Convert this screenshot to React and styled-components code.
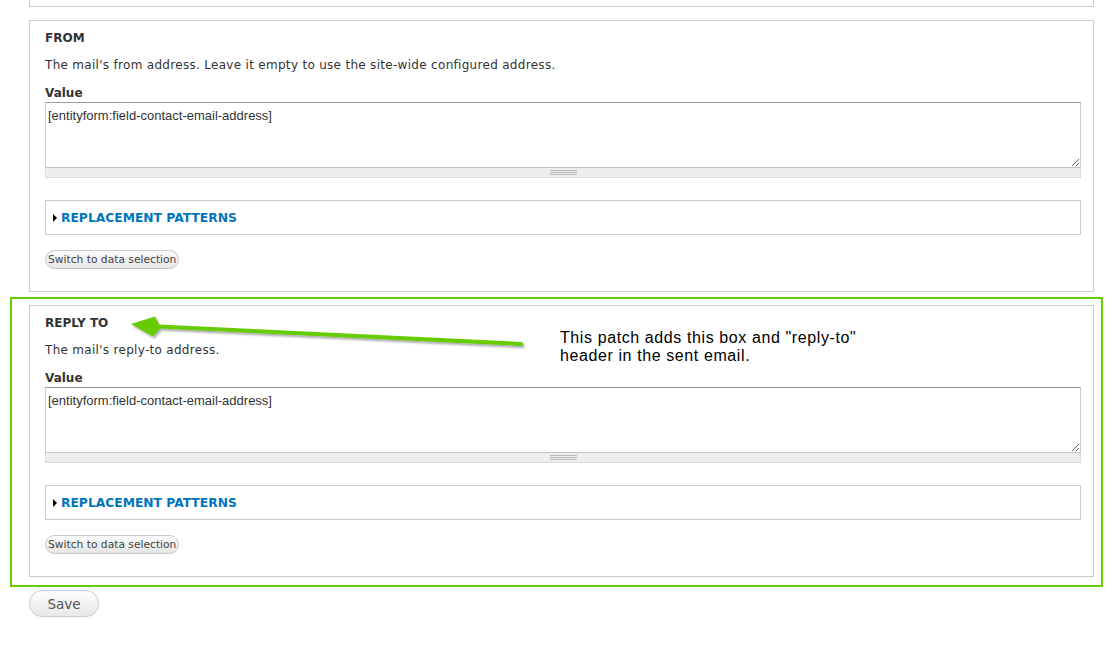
import React from "react";
import styled, { createGlobalStyle } from "styled-components";

const GlobalStyle = createGlobalStyle`
  body {
    margin: 0;
    background: #fff;
    color: #333;
    font-family: "DejaVu Sans", Verdana, sans-serif;
  }
`;

const Page = styled.div`
  width: 1113px;
  height: 648px;
  padding-left: 29px;
  box-sizing: border-box;
  overflow: hidden;
`;

const Stub = styled.div`
  width: 1065px;
  height: 7px;
  border: 1px solid #ccc;
  border-top: none;
  box-sizing: border-box;
`;

const Fieldset = styled.section`
  width: 1065px;
  margin-top: ${(p) => (p.$first ? "13px" : "0")};
  border: 1px solid #ccc;
  padding: 9px 12px 22px 15px;
  box-sizing: border-box;
  display: flex;
  flex-direction: column;
`;

const Legend = styled.div`
  font-size: 12px;
  line-height: 16px;
  font-weight: bold;
  text-transform: uppercase;
  color: #333;
`;

const Description = styled.div`
  margin-top: 11px;
  font-size: 12px;
  line-height: 16px;
  letter-spacing: 0.3px;
  color: #333;
`;

const Label = styled.label`
  margin-top: 12px;
  font-size: 12px;
  line-height: 16px;
  font-weight: bold;
  color: #333;
`;

const TextArea = styled.textarea`
  margin-top: 1px;
  display: block;
  width: 100%;
  height: 65px;
  box-sizing: border-box;
  border: 1px solid #ccc;
  border-top-color: #999;
  border-bottom: none;
  padding: 5px 2px;
  font-family: "Liberation Sans", Arial, sans-serif;
  font-size: 13px;
  line-height: 15px;
  color: #333;
  resize: vertical;
  outline: none;
`;

const Grippie = styled.div`
  height: 11px;
  box-sizing: border-box;
  border-top: 1px solid #c4c4c4;
  border-bottom: 1px solid #ddd;
  border-left: 1px solid #ddd;
  border-right: 1px solid #ddd;
  background: #eee;
  display: flex;
  flex-direction: column;
  align-items: center;
  justify-content: center;
  gap: 1px;
`;

const GripLine = styled.span`
  width: 27px;
  height: 1px;
  background: #bbb;
`;

const Collapsible = styled.div`
  margin-top: 22px;
  height: 35px;
  box-sizing: border-box;
  border: 1px solid #ccc;
  padding-left: 7px;
  display: flex;
  align-items: center;
  gap: 4px;

  &::before {
    content: "";
    width: 0;
    height: 0;
    border-top: 4px solid transparent;
    border-bottom: 4px solid transparent;
    border-left: 4px solid #000;
  }
`;

const CollapseLink = styled.a`
  font-size: 12.3px;
  font-weight: bold;
  line-height: 16px;
  text-transform: uppercase;
  color: #0074bd;
  text-decoration: none;
  cursor: pointer;
`;

const SmallButton = styled.button`
  margin-top: 15px;
  align-self: flex-start;
  height: 19px;
  padding: 0 2px;
  border: 1px solid #c8c8c8;
  border-radius: 10px;
  background: linear-gradient(#fbfbfb, #e6e6e6);
  font-family: "DejaVu Sans", Verdana, sans-serif;
  font-size: 10.7px;
  line-height: 17px;
  color: #444;
  cursor: pointer;
`;

const Highlight = styled.div`
  position: relative;
  width: 1093px;
  margin: 5px 0 0 -19px;
  border: 2px solid #66cc00;
  padding: 6px 7px 8px 17px;
  box-sizing: border-box;
`;

const Note = styled.div`
  position: absolute;
  left: 548px;
  top: 30px;
  font-family: "Liberation Sans", Arial, sans-serif;
  font-size: 16px;
  line-height: 18px;
  letter-spacing: 0.6px;
  color: #000;
`;

const Arrow = styled.svg`
  position: absolute;
  left: 108px;
  top: 11px;
  width: 420px;
  height: 45px;
  overflow: visible;
`;

const SaveButton = styled.button`
  margin-top: 3px;
  width: 70px;
  height: 27px;
  border: 1px solid #ccc;
  border-radius: 13px;
  background: linear-gradient(#fdfdfd, #e8e8e8);
  font-family: "DejaVu Sans", Verdana, sans-serif;
  font-size: 13.5px;
  color: #555;
  cursor: pointer;
`;

const ARROW_POINTS =
  "131,324 155,316.5 159,324.5 522,342 523.5,344 522,346 160,328.5 153,336.5";

function ActionBox({ title, description }) {
  return (
    <>
      <Legend>{title}</Legend>
      <Description>{description}</Description>
      <Label>Value</Label>
      <TextArea readOnly defaultValue="[entityform:field-contact-email-address]" />
      <Grippie>
        <GripLine />
        <GripLine />
        <GripLine />
      </Grippie>
      <Collapsible>
        <CollapseLink>Replacement patterns</CollapseLink>
      </Collapsible>
      <SmallButton>Switch to data selection</SmallButton>
    </>
  );
}

export default function App() {
  return (
    <Page>
      <GlobalStyle />
      <Stub />
      <Fieldset $first>
        <ActionBox
          title="From"
          description="The mail's from address. Leave it empty to use the site-wide configured address."
        />
      </Fieldset>
      <Highlight>
        <Fieldset>
          <ActionBox title="Reply to" description="The mail's reply-to address." />
        </Fieldset>
        <Arrow viewBox="120 310 420 45">
          <defs>
            <filter id="arrowShadow" x="-10%" y="-50%" width="120%" height="200%">
              <feDropShadow dx="1.5" dy="2" stdDeviation="1" floodColor="#000" floodOpacity="0.35" />
            </filter>
          </defs>
          <polygon points={ARROW_POINTS} fill="#66cc00" filter="url(#arrowShadow)" />
        </Arrow>
        <Note>
          This patch adds this box and "reply-to"
          <br />
          header in the sent email.
        </Note>
      </Highlight>
      <SaveButton>Save</SaveButton>
    </Page>
  );
}
